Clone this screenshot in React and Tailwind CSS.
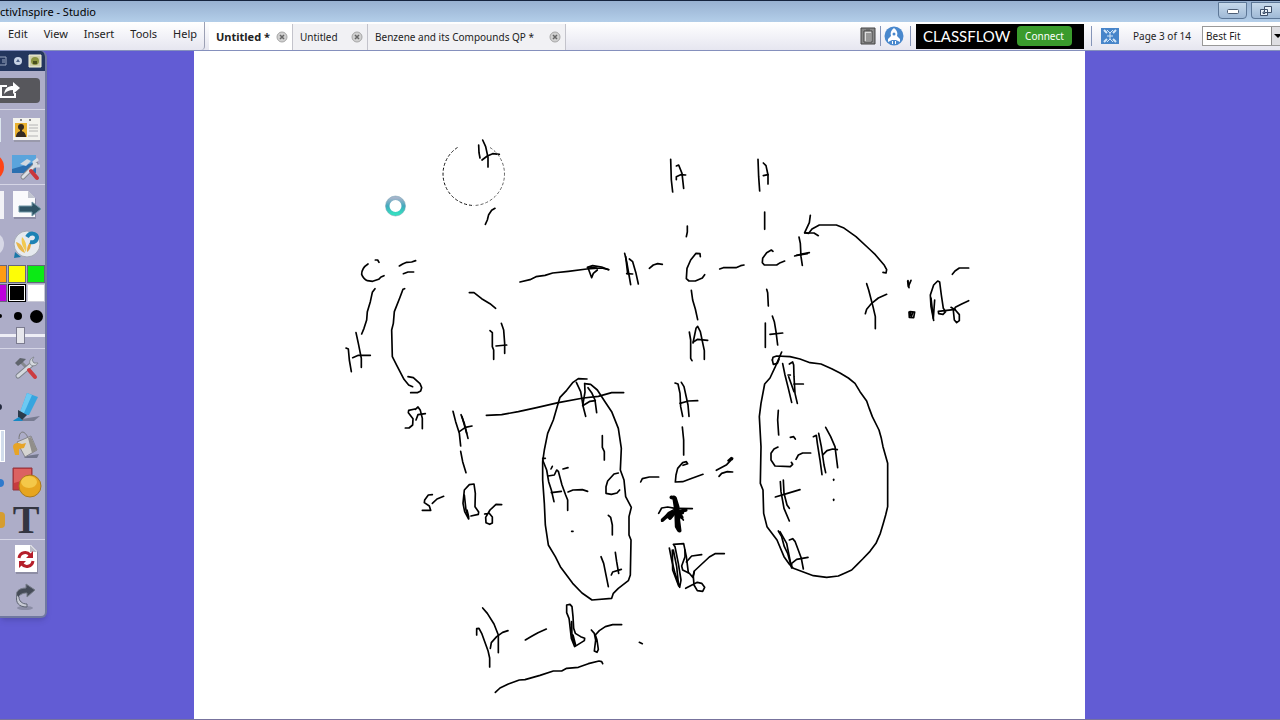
import React, { useState } from "react";

const menus = ["Edit", "View", "Insert", "Tools", "Help"];

const tabs = [
	{ id: 1, name: "Untitled *", width: "w-[84px]" },
	{ id: 2, name: "Untitled", width: "w-[75px]" },
	{ id: 3, name: "Benzene and its Compounds QP *", width: "w-[198px]" },
];

// Pen strokes, three units to the pixel, each group measured from its own origin
const ink = [
	{
		origin: "translate(330 130) scale(0.33333)",
		strokes: [
			"M446 45L447 68L450 84", "M458 30L467 50L474 82V111", "M456 90L472 78L488 71L508 73",
			"M466 283L472 270L476 254L485 241L495 235",
			"M136 390H143L147 397", "M114 402Q95 414 95 433Q101 448 112 452L128 454L146 448L153 441L162 437",
			"M208 408L218 402L230 397L245 396L257 392", "M220 431L234 426H251",
			"M135 476L127 487L121 515L112 545L110 570L102 595L95 612",
			"M48 654L55 657L58 690L64 725", "M78 608L85 640L94 685V712", "M68 683L85 676H121",
			"M224 476L219 478L210 502L193 545L190 580L185 600L187 680L201 708L222 748L236 765L248 770",
			"M234 740L250 743L270 761L275 773L272 783L262 788H242",
			"M418 488H432L455 506L480 521L497 535",
			"M480 602L487 608V650L491 660V688", "M514 580L521 600L524 640V670", "M498 648L530 645",
			"M570 456L600 449L618 440L645 436L668 429L715 424L770 417L815 414L836 419",
			"M772 412L788 407L815 411L836 419", "M774 413L785 443L790 430L802 420", "M776 414L800 411",
		],
	},
	{
		origin: "translate(610 140) scale(0.33333)",
		strokes: [
			"M182 58L184 120L188 156", "M199 78L206 75L216 100L221 145", "M199 119V110L212 104L227 105",
			"M444 58L446 110L449 153", "M460 69L468 77L474 105V132", "M460 107L474 104",
			"M232 258V276L229 290", "M464 216V268",
			"M271 350L270 341L258 340L242 360L231 385L229 416L237 423H256L277 414L284 404",
			"M329 387L340 383H378L392 377L402 375",
			"M489 334L484 330L470 338L458 355L457 368L463 375H500L511 368L524 363",
			"M567 291L571 310L573 350L577 376", "M554 348L575 342L598 338", "M560 346L592 341",
			"M44 340L50 365L57 405L62 434", "M47 350L53 401", "M58 357L68 365L78 400L85 432", "M50 401L68 402",
			"M118 385L130 375L143 371L157 373",
			"M244 451L248 480L256 507L263 539",
			"M238 576L242 600V655L246 662", "M249 609L258 565L263 559L271 575L283 632V658", "M250 606L263 598L293 601",
			"M470 448L473 458L475 498",
			"M466 549V622", "M487 528L493 545L498 575L503 615", "M480 583L518 579",
			"M601 226L598 248L584 278L596 280L606 267L628 255H679L700 263L738 290L778 327L796 344L823 376L830 389L828 399L819 397",
			"M584 279H612L625 287",
			"M770 431L776 450L789 500L796 530V566", "M766 521L770 508L785 490L805 474L830 463",
			"M894 422L895 440L903 421", "M893 424L897 443", "M897 516L898 532L911 533L914 516L900 515L904 530L908 518",
			"M1027 403L1035 393L1048 384H1076",
			"M971 541L963 500L961 465L971 435L983 423L989 426L994 465L1000 505L1007 515L999 523L986 521L985 514L1036 508",
			"M963 474L970 535L974 480", "M1076 482L1055 492L1036 502L1030 512L1033 540L1040 548L1048 542V524L1036 510L1023 502",
		],
	},
	{
		origin: "translate(390 370) scale(0.33333)",
		strokes: [
			"M75 117L56 121L55 128L69 146L68 165L57 174H46", "M76 118L84 111L91 121L97 145V176", "M78 150L84 134L106 131",
			"M189 124L197 155L208 190L212 228", "M213 134L223 160L234 205", "M208 185L226 172L246 168", "M216 140L230 190",
			"M212 244L218 275L228 308",
			"M236 447L224 425L219 400L223 360L238 344L252 342L256 370L255 410L266 426L265 433L243 438",
			"M223 375L228 420L236 444", "M231 420L236 440",
			"M335 404L318 403L300 420L287 442L288 458L299 463L307 459V441L297 429L284 432",
			"M127 374L115 375L104 390L103 398L118 408L122 421L97 421", "M127 400L141 387L161 379",
			"M289 136L335 134L385 125L440 113L505 98L580 84L625 79L665 68H701",
			"M591 27L565 26L549 37L530 61L510 82L503 105L490 150L473 190L463 240L458 275V330L463 400L466 465L475 525L496 560L511 590L548 640L576 669L606 690L665 685L670 670L685 655L715 632L721 615L723 510L717 495L717 440L724 412L707 380L702 330L691 300L694 235L685 175L665 125L645 95L622 60L602 43L584 41",
			"M559 37L572 65L580 112L587 139", "M584 41L585 66L578 107L600 94L616 92", "M594 53L606 70L615 90L620 128",
			"M637 197V232L643 245V270",
			"M685 309L672 312L653 333L648 350V370L664 373L681 369L689 360",
			"M655 436L662 442L667 465V495",
			"M633 560L641 580L649 620L655 650", "M676 547L680 575L686 610", "M664 615L668 606L694 598",
			"M458 265L466 265", "M458 270L470 300L476 335L484 360L492 395", "M474 318L493 315L500 300L505 304L516 345L527 375L533 390V421",
			"M483 297L487 289", "M519 297L534 293", "M484 368L514 364", "M534 366L549 360L577 359L593 364",
			"M545 484L549 484",
		],
	},
	{
		origin: "translate(620 350) scale(0.33333)",
		strokes: [
			"M165 99L174 102L180 130L182 170L188 199", "M184 97L192 110L204 165L207 199", "M180 160L205 153L233 152",
			"M187 231L191 270V315",
			"M62 396L67 386L88 381H116",
			"M189 346L203 341L199 335L188 338L173 355L168 375L166 396L188 395L218 384L249 373",
			"M289 361L320 344L338 325L334 323L324 332L337 328", "M297 379L305 370L322 365L338 366",
			"M457 30L459 22L470 18L510 20L540 27L570 38L603 42L635 56L660 69L685 84L705 100L720 125L740 153L748 176L757 200L777 240L784 265L789 290L803 340V470L797 495L790 520L781 550L768 580L750 604L728 627L712 643L695 660L677 668L655 678L620 682L580 677L520 655L506 640L492 620L471 570L441 530L431 490L429 420L421 400L423 290L418 200L423 160L434 102L450 84L466 50L485 6",
			"M457 30L460 43L472 40L477 28",
			"M488 41L495 75L505 115L515 157", "M508 42L518 36L521 45L522 80L525 130L532 160", "M522 102L550 102", "M504 75L511 75", "M506 80L522 125",
			"M475 181L473 210L476 255",
			"M511 262L521 260L526 267", "M474 291L462 297L453 310V330L465 348L511 350L518 343L514 337",
			"M528 328L535 315L548 309H572",
			"M580 260L589 256L592 280L600 330L606 374", "M596 250L604 290L612 345L617 368", "M617 232L632 260L645 290L653 353", "M609 314L621 302L638 297L652 299",
			"M641 388V391", "M641 448V451",
			"M490 390L492 430L501 465L508 475", "M481 395L483 425L492 475L508 513", "M466 441L500 431L540 419",
			"M475 543L485 560L493 590L503 610L515 654", "M480 545L500 580L512 640", "M508 570L518 566L525 574L544 625L550 657", "M515 648V640L530 628L564 622",
		],
	},
	{
		origin: "translate(450 590) scale(0.33333)",
		strokes: [
			"M80 135V116L87 115L95 130L114 182L119 204V231", "M98 54L112 70L132 102L145 135V188", "M121 175L124 158L140 140L158 127L174 122",
			"M226 150L245 139L264 128L289 117",
			"M360 105L357 85L350 68V45L360 43L366 50L369 80L371 115L376 130L392 140L404 145L403 152L374 170L364 145L358 92",
			"M365 95L366 145L377 166L369 135",
			"M424 120L433 130L437 150L433 183L441 187L445 178L441 150L436 135L448 122L466 110L488 104H515",
			"M568 157L577 161",
			"M136 307L150 294L175 282L208 270L225 269L270 256L310 243L335 243L350 235L385 232L415 221L447 213L455 215L458 221",
		],
	},
];

// Thick marks where the pen went over the same spot several times
const scribbles = [
	"M154 442L165 444L173 470L175 510L179 542",
	"M162 442L168 480L170 530L176 540",
	"M128 510L145 495L170 487L197 480",
	"M145 500L155 488L187 488",
	"M150 504L170 480L185 502",
];

const scribbledBr = [
	"M125 513L145 488L170 475L217 476", "M116 490L125 474L143 471L166 475L190 510",
	"M148 594L155 630L165 670L179 712L183 690L175 640L165 590L160 583L191 581L199 620L205 668",
	"M157 600L158 660L176 708L170 650L160 600", "M195 600V620L185 648L188 660L208 670L218 682L223 664",
	"M199 636L215 618L245 614", "M313 611H285L268 621L223 663L220 680L222 705L232 722L248 724L254 712L245 700L232 697L197 715",
];

const CloseIcon = () => (
	<svg viewBox="0 0 12 12" className="size-3">
		<circle cx="6" cy="6" r="5" fill="#d0d0d0" stroke="#a6a6a6" />
		<path d="M4 4l4 4M8 4l-4 4" stroke="#666" strokeWidth="1.5" />
	</svg>
);

const Separator = () => <span className="h-5 w-px bg-[#8494b8]" />;

const Divider = () => <hr className="border-0 border-t border-[#d5d5e6]" />;

const ToolRow = ({ label, left, height, children }) => (
	<div className={`flex items-center ${height}`}>
		<span className="w-[5px] shrink-0 overflow-hidden">{left}</span>
		<button title={label} aria-label={label} className="ml-[5px] flex w-8 justify-center">
			{typeof children === "string" ? (
				<span className="font-['Liberation_Serif',serif] text-[40px] leading-[38px] font-bold text-[#333541]">{children}</span>
			) : (
				<svg viewBox="0 0 32 32" className="size-8">{children}</svg>
			)}
		</button>
	</div>
);

const Toolbox = () => {
	const [size, setSize] = useState(44);

	return (
		<aside className="w-[47px] shrink-0 self-start overflow-hidden rounded-r-md border-r-2 border-b-2 border-[#7078a0] bg-[#adadc8] shadow-md">
			<div className="flex h-5 items-center gap-1 bg-[#24365e]">
				<svg viewBox="0 0 8 12" className="h-3 w-2"><path d="M0 2h6v8H0M2 5h3M2 7h3" fill="none" stroke="#99a5bf" /></svg>
				<svg viewBox="0 0 12 12" className="size-3"><circle cx="6" cy="6" r="4" fill="#c7d2e5" /><path d="M4 7l2-3 2 3z" fill="#4e628a" /></svg>
				<svg viewBox="0 0 14 14" className="size-3.5"><path d="M1 1h12v12H1z" fill="#cfcfad" stroke="#f5f5df" /><circle cx="7" cy="7" r="4" fill="#8a9440" /><path d="M5 7h4v3H5z" fill="#49501d" /></svg>
			</div>
			<div className="flex h-[38px] items-center">
				<button aria-label="Share" className="flex h-[25px] w-10 items-center rounded-r bg-[#57575c]">
					<svg viewBox="0 0 22 18" className="h-[18px] w-[22px]">
						<path d="M7 5H1v11h14v-4" fill="none" stroke="#fff" strokeWidth="2" />
						<path d="M4 13c1-6 4-8 9-8V1l7 6-7 6V9c-4 0-6 1-9 4z" fill="#fff" />
					</svg>
				</button>
			</div>
			<Divider />
			<ToolRow label="Profiles" height="h-10" left={<span className="block h-6 w-px bg-[#dce6ee]" />}>
				<path d="M4 6h26v22H4z" fill="#9999ab" />
				<path d="M3 4h27v22H3z" fill="#f3f3ee" />
				<path d="M5 9h12v14H5z" fill="#e9b12f" />
				<circle cx="11" cy="13" r="3" fill="#352b20" />
				<path d="M10 15h2v2h-2z" fill="#352b20" />
				<path d="M6 23c0-4 3-6 5-6s5 2 5 6z" fill="#352b20" />
				<path d="M19 11h9M19 14h9M19 17h9M18 22h10" stroke="#b4b4b4" />
				<circle cx="11" cy="6" r="1" fill="#666" /><circle cx="20" cy="6" r="1" fill="#666" />
			</ToolRow>
			<ToolRow label="Desktop tools" height="h-[34px]" left={<span className="-ml-6 block size-7 rounded-full bg-[#ff4316]" />}>
				<path d="M2 4h24v18H2z" fill="#2b6fb0" />
				<path d="M2 4h24v7L2 18z" fill="#5aa4dc" />
				<path d="M10 13l7-5 4 2-5 5" fill="#d1d8df" />
				<path d="M13 26L26 13" stroke="#85888e" strokeWidth="5" strokeLinecap="round" />
				<path d="M13 26L26 13" stroke="#dde0e5" strokeWidth="3" strokeLinecap="round" />
				<path d="M28 8l-4 3 1 4 5 0" fill="none" stroke="#d8dce2" strokeWidth="3" />
				<path d="M21 20l6 7" stroke="#c9363d" strokeWidth="4" strokeLinecap="round" />
			</ToolRow>
			<Divider />
			<ToolRow label="Export page" height="h-10" left={<span className="block h-7 w-1 bg-[#f2f2f6]" />}>
				<path d="M4 3h15l7 7v20H4z" fill="#8c8ca6" />
				<path d="M3 2h15l7 7v19H3z" fill="#fafafc" />
				<path d="M18 2v7h7z" fill="#c2c5d0" />
				<path d="M9 17h13v-4l9 7-9 7v-4H9z" fill="#2f5365" stroke="#6f95a5" />
			</ToolRow>
			<ToolRow label="Resources" height="h-[38px]" left={<span className="-ml-5 block size-6 rounded-full bg-[#d7d8e6]" />}>
				<circle cx="17" cy="16" r="13" fill="#e6eaef" stroke="#a4a9b5" />
				<path d="M15 25c-2-7-5-10-9-11 1 5 4 9 9 11z" fill="#e9b64a" />
				<path d="M16 24c-4-6-5-10-4-15 4 4 5 9 4 15z" fill="#f2c94f" />
				<path d="M17 24c0-5 1-8 4-10 0 5-1 8-4 10z" fill="#e9a83a" />
				<path d="M17 9c3-5 9-4 10 0 0 4-3 6-7 5" fill="none" stroke="#1c82b4" strokeWidth="4" />
				<path d="M5 24l6 5-7 1z" fill="#1a78a8" />
			</ToolRow>
			<div className="mt-0.5 grid grid-cols-[7px_18px_18px] gap-px">
				<button aria-label="Orange" className="h-[18px] border border-l-0 border-[#66667a] bg-[#ff9c12]" />
				<button aria-label="Yellow" className="h-[18px] border border-[#66667a] bg-[#fdfd06]" />
				<button aria-label="Green" className="h-[18px] border border-[#66667a] bg-[#0bea15]" />
				<button aria-label="Purple" className="h-[18px] border border-l-0 border-[#66667a] bg-[#bd00dd]" />
				<button aria-label="Black" className="h-[18px] border-2 border-white bg-black outline outline-black -outline-offset-1" />
				<button aria-label="White" className="h-[18px] border border-[#c9c9d6] bg-white" />
			</div>
			<div className="flex h-7 items-center">
				<button aria-label="Fine pen" className="h-1 w-[2px] rounded-r bg-black" />
				<button aria-label="Medium pen" className="ml-3 size-2 rounded-full bg-black" />
				<button aria-label="Thick pen" className="ml-2 size-[13px] rounded-full bg-black" />
			</div>
			<div className="flex h-[18px] items-start">
				<input
					type="range"
					aria-label="Pen width"
					value={size}
					onChange={e => setSize(Number(e.target.value))}
					className="mt-1 h-[3px] w-full appearance-none bg-[#eeeef6] [&::-webkit-slider-thumb]:h-[17px] [&::-webkit-slider-thumb]:w-[9px] [&::-webkit-slider-thumb]:appearance-none [&::-webkit-slider-thumb]:border [&::-webkit-slider-thumb]:border-[#7c7c90] [&::-webkit-slider-thumb]:bg-[#e6e6ec]"
				/>
			</div>
			<Divider />
			<ToolRow label="Tools" height="h-[38px]">
				<path d="M10 9l11 11" stroke="#85888e" strokeWidth="3" />
				<path d="M5 11l5-5 6 1-4 4-4 3z" fill="#60656d" />
				<path d="M8 24L22 12" stroke="#7d828b" strokeWidth="5" strokeLinecap="round" />
				<path d="M8 24L22 12" stroke="#d5d9df" strokeWidth="3" strokeLinecap="round" />
				<path d="M24 5c-4 1-5 5-4 7s6 3 8-1l-4 0-2-3z" fill="#d5d9df" stroke="#858a93" />
				<path d="M19 18l6 7" stroke="#cc3b40" strokeWidth="4" strokeLinecap="round" />
			</ToolRow>
			<ToolRow label="Highlighter" height="h-10" left={<span className="-ml-1 block size-1.5 rounded-full bg-[#22283c]" />}>
				<path d="M12 28l18-3-6 5H10z" fill="#777b91" />
				<path d="M17 2l11 4-9 18H9z" fill="#37a5df" />
				<path d="M17 2l5 2-8 18-5 2z" fill="#6cc9f3" />
				<path d="M8 19l9 5-5 5-4-3z" fill="#2b3b4b" />
				<path d="M4 29l5-3 4 4H3z" fill="#1589c5" />
			</ToolRow>
			<ToolRow label="Fill" height="h-[38px]" left={<span className="block h-8 border border-white bg-[#d1dcec]" />}>
				<path d="M9 9c0-9 6-9 9-1" fill="none" stroke="#777" />
				<path d="M16 26l13-2-2 4H14z" fill="#72758b" />
				<path d="M7 12l14-6 6 14-12 7z" fill="#d5d4d1" stroke="#85858c" />
				<path d="M18 8l3-1 6 13-5 3z" fill="#918e8a" />
				<path d="M3 17c0-4 4-5 9-3l4-1-2 5-5 1v6H5z" fill="#e7a426" />
			</ToolRow>
			<ToolRow label="Shapes" height="h-9" left={<span className="-ml-1 block size-2 rounded-full bg-[#2e79cc]" />}>
				<path d="M3 1h19v22H3z" fill="#c73b40" stroke="#91363f" />
				<path d="M4 2h17v9L4 16z" fill="#dc6261" />
				<circle cx="20" cy="19" r="11" fill="#e7a51f" stroke="#a77920" />
				<ellipse cx="19" cy="15" rx="8" ry="6" fill="#f4c849" />
			</ToolRow>
			<ToolRow label="Text" height="h-[38px]" left={<span className="block h-4 rounded-r bg-[#d69d2f]" />}>T</ToolRow>
			<Divider />
			<ToolRow label="Reset page" height="h-[38px]">
				<path d="M6 3h16l6 6v22H6z" fill="#8d8da4" />
				<path d="M5 2h16l6 6v21H5z" fill="#fff" />
				<path d="M20 2v7h7z" fill="#bbbdc7" />
				<path d="M9 15c1-6 8-7 11-3M23 18c-1 6-8 7-11 3" fill="none" stroke="#b51f2b" strokeWidth="3" />
				<path d="M23 8v7h-7zM9 25v-7h7z" fill="#b51f2b" />
			</ToolRow>
			<ToolRow label="Redo" height="h-[38px]">
				<ellipse cx="15" cy="27" rx="8" ry="2" fill="#8b8da5" />
				<path d="M16 3l9 6-8 7v-4c-5 0-8 2-9 5-4-5 0-10 8-10z" fill="#454b57" stroke="#777d89" />
				<path d="M7 14c-2 8 2 12 10 12v-3c-5 0-8-3-8-7z" fill="#c7cad4" stroke="#5c6270" />
			</ToolRow>
		</aside>
	);
};

const Flipchart = () => (
	<svg viewBox="194 51 891 667" className="block h-auto w-full" role="img" aria-label="Reaction mechanism, handwritten">
		<defs>
			<linearGradient id="busy" x1="0" y1="0" x2="0" y2="1">
				<stop offset="0" stopColor="#a5b4cb" />
				<stop offset="0.5" stopColor="#41a9bd" />
				<stop offset="1" stopColor="#35dfc0" />
			</linearGradient>
		</defs>
		<g fill="none" stroke="#000" strokeWidth="5" strokeLinecap="round" strokeLinejoin="round">
			{ink.map(group => (
				<g key={group.origin} transform={group.origin}>
					{group.strokes.map(d => <path key={d} d={d} />)}
				</g>
			))}
			<g transform="translate(620 350) scale(0.33333)">
				{scribbledBr.map(d => <path key={d} d={d} />)}
				<g strokeWidth="11">
					{scribbles.map(d => <path key={d} d={d} />)}
				</g>
			</g>
		</g>
		{/* Eraser outline */}
		<path d="M457.500 147.500A31.500 31.500 0 0 0 474 205.500" fill="none" stroke="#111" strokeDasharray="3 2" />
		<path d="M490 147.500A31.500 31.500 0 0 1 474 205.500" fill="none" stroke="#666" strokeDasharray="3 2" />
		{/* Busy pointer */}
		<circle cx="395.500" cy="206" r="8" fill="#fff" stroke="url(#busy)" strokeWidth="4" />
		<circle cx="395.500" cy="206" r="10" fill="none" stroke="#6d9daf" strokeWidth="0.500" />
	</svg>
);

export default function App() {
	const [activeTab, setActiveTab] = useState(1);
	const [zoom, setZoom] = useState("Best Fit");

	return (
		<div className="flex min-h-screen flex-col overflow-hidden bg-[#625cd4] font-['Noto_Sans',sans-serif] text-[11px] text-[#222]">
			<header>
				<div className="flex h-[22px] items-center justify-between border-t border-[#15233d] bg-linear-to-b from-[#98b1d1] to-[#b3cee9]">
					<h1 className="leading-5 text-black">ctivInspire - Studio</h1>
					<div className="flex gap-1 self-start pt-px">
						<button aria-label="Minimize" className="flex h-[17px] w-[29px] items-center justify-center rounded-b border border-[#5d7797] bg-linear-to-b from-[#c7d9eb] to-[#9fb9d6]">
							<svg viewBox="0 0 12 6" className="h-1.5 w-3"><rect x="0.500" y="1.500" width="11" height="4" rx="1" fill="#fff" stroke="#4c5d75" /></svg>
						</button>
						<button aria-label="Restore" className="flex h-[17px] w-[29px] items-center justify-center rounded-bl border border-r-0 border-[#5d7797] bg-linear-to-b from-[#c7d9eb] to-[#9fb9d6]">
							<svg viewBox="0 0 12 12" className="size-3" fill="#e9f1f9" stroke="#3f506b"><path d="M4.500 1.500h7v6h-7zM.5 4.500h7v6h-7z" /><path d="M3 7h2v1.500H3z" /></svg>
						</button>
					</div>
				</div>
				<div className="flex h-[29px] border-b border-[#8590bd] bg-linear-to-b from-white to-[#e6e6f0]">
					<nav className="flex w-[205px] shrink-0 items-start gap-4 rounded-br border-r border-[#9ca0b4] pt-1 pl-2 leading-4">
						{menus.map(name => <button key={name}>{name}</button>)}
					</nav>
					<div role="tablist" className="ml-1 flex pt-0.5">
						{tabs.map(tab => (
							<div
								key={tab.id}
								className={`flex ${tab.width} items-center justify-between border-r border-[#c3c3cb] pr-1 pl-[7px] ${activeTab === tab.id ? "bg-white font-bold" : "bg-[#f1f1f4] text-[10px]"}`}
							>
								<button role="tab" aria-selected={activeTab === tab.id} className="whitespace-nowrap" onClick={() => setActiveTab(tab.id)}>
									{tab.name}
								</button>
								<button aria-label={`Close ${tab.name}`}><CloseIcon /></button>
							</div>
						))}
					</div>
					<div className="ml-auto flex shrink-0 items-center">
						<button aria-label="Notes" className="mr-1">
							<svg viewBox="0 0 16 18" className="h-[18px] w-4"><path d="M1 1h14v16H1z" fill="#888" stroke="#444" /><path d="M4 4h8v11H4z" fill="#ddd" stroke="#444" /><path d="M6 3h4M6 7h5M6 9h5M6 11h5M6 13h5" stroke="#555" /></svg>
						</button>
						<Separator />
						<button aria-label="Launch" className="mx-[3px]">
							<svg viewBox="0 0 20 20" className="size-5">
								<circle cx="10" cy="10" r="9.500" fill="#4988cd" />
								<path d="M10 2c3 2 4 5 3 8l3 3v3l-4-2H8l-4 2v-3l3-3c-1-3 0-6 3-8zM8 15h1v3H8zM11 15h1v3h-1z" fill="#fff" />
								<circle cx="10" cy="8" r="1.500" fill="#4988cd" />
							</svg>
						</button>
						<span className="mx-[3px] flex"><Separator /></span>
						<div className="ml-0.5 flex h-[25px] w-[168px] items-center justify-between bg-black pr-3 pl-[7px]">
							<span className="font-[Lato,sans-serif] text-[15px] leading-5 text-white">CLASSFLOW</span>
							<button className="h-5 w-[55px] rounded bg-[#3a9b2c] text-[10px] leading-5 text-white">Connect</button>
						</div>
						<span className="mx-[7px] flex"><Separator /></span>
						<button aria-label="Fit page" className="ml-0.5">
							<svg viewBox="0 0 18 18" className="size-[18px]"><path d="M0 1h18v16H0z" fill="#4785ca" /><path d="M3 3l3 3M15 3l-3 3M3 15l3-3M15 15l-3-3" stroke="#d2e5f7" strokeWidth="2" /><path d="M6 3l3 3 3-3M6 15l3-3 3 3M9 6v6M6 9h6" fill="none" stroke="#d2e5f7" /></svg>
						</button>
						<span className="ml-[14px] w-[69px] text-[10px] whitespace-nowrap">Page 3 of 14</span>
						<div className="flex h-5 w-[78px] border border-r-0 border-[#999] bg-white text-[10px]">
							<select aria-label="Zoom" value={zoom} onChange={e => setZoom(e.target.value)} className="w-[68px] appearance-none pl-[3px] leading-4">
								<option>Best Fit</option>
								<option>Fit to Width</option>
							</select>
							<svg viewBox="0 0 9 18" className="h-[18px] w-[9px]"><path d="M0 0h9v18H0z" fill="#dedee2" /><path d="M.5 0v18" stroke="#888" /><path d="M3 7h8l-4 4z" fill="#000" /></svg>
						</div>
					</div>
				</div>
			</header>

			<main className="flex flex-1 items-stretch">
				<Toolbox />
				<div className="mr-[195px] ml-[147px] flex-1 bg-white">
					<Flipchart />
				</div>
			</main>
			<footer className="h-px bg-[#77739d]" />
		</div>
	);
}
